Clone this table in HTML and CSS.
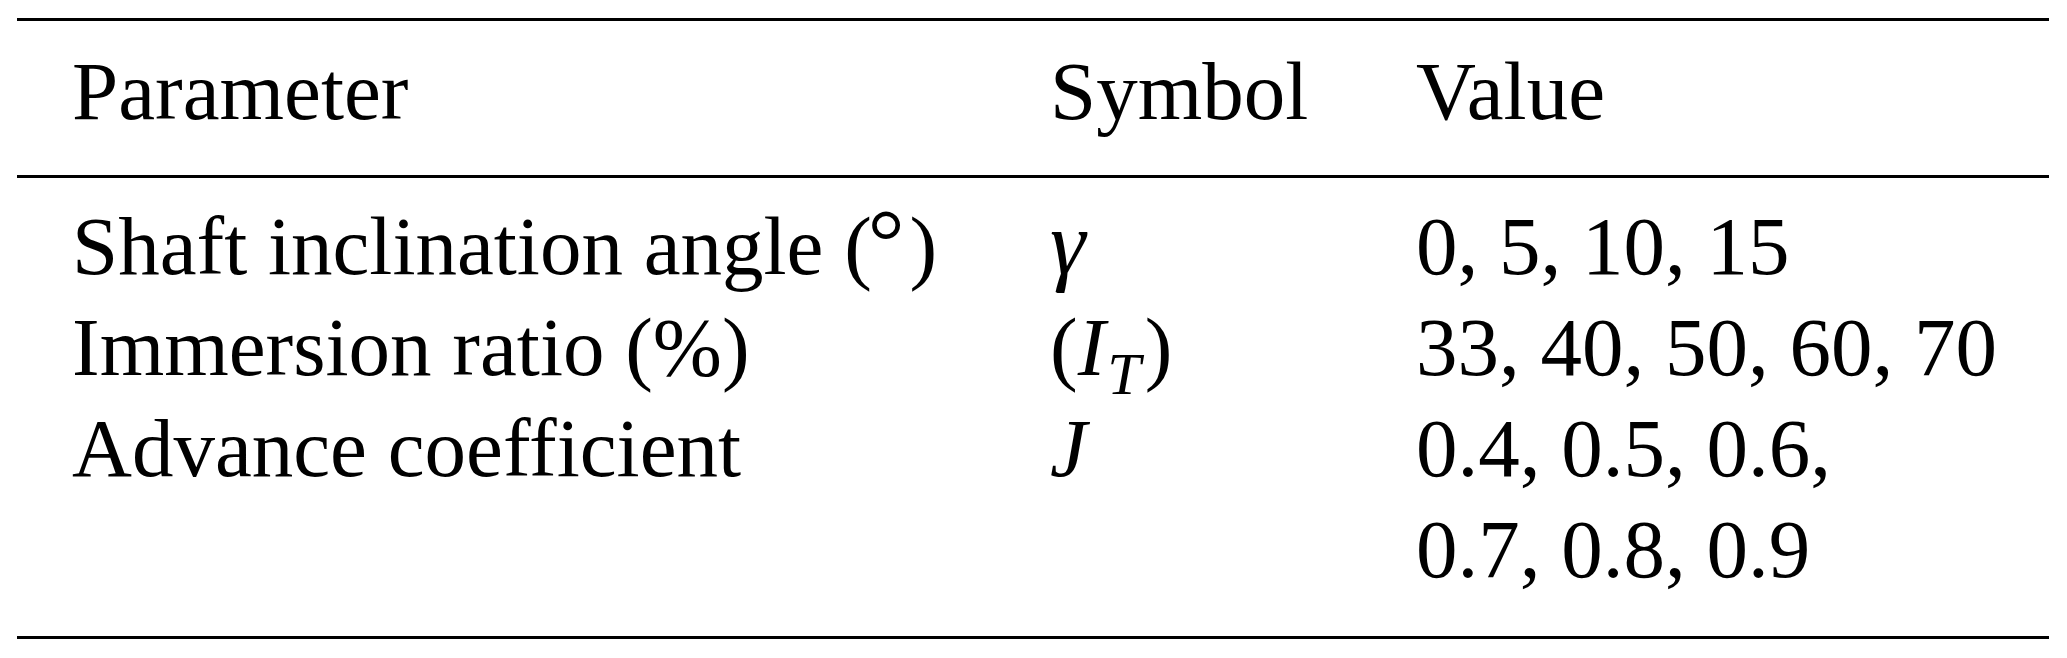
FILE: index.html
```html
<!DOCTYPE html>
<html lang="en">
<head>
<meta charset="utf-8">
<title>Parameters</title>
<link rel="stylesheet" href="styles.css">
</head>
<body>
<div class="sheet">
  <div class="row head">
    <div class="cell">Parameter</div>
    <div class="cell">Symbol</div>
    <div class="cell">Value</div>
  </div>
  <div class="row body">
    <div class="cell">Shaft inclination angle (<span class="deg">°</span>)</div>
    <div class="cell"><i class="math gamma">γ</i></div>
    <div class="cell">0, 5, 10, 15</div>

    <div class="cell">Immersion ratio (%)</div>
    <div class="cell">(<i class="math">I</i><sub class="sub"><i class="math">T</i></sub>)</div>
    <div class="cell">33, 40, 50, 60, 70</div>

    <div class="cell">Advance coefficient</div>
    <div class="cell"><i class="math">J</i></div>
    <div class="cell">0.4, 0.5, 0.6,<br>0.7, 0.8, 0.9</div>
  </div>
</div>
</body>
</html>
```

FILE: styles.css
```css
html, body {
  margin: 0;
  padding: 0;
  background: #ffffff;
}

body {
  font-family: "Liberation Serif", "Times New Roman", serif;
  font-size: 83px;
  line-height: 101px;
  color: #000000;
}

.sheet {
  width: 2032px;
  margin: 18px 0 0 17px;
  border-top: 3px solid #000000;
  border-bottom: 3px solid #000000;
}

.row {
  display: grid;
  grid-template-columns: 978px 366px 1fr;
  padding-left: 55px;
}

.head {
  padding-top: 20px;
  padding-bottom: 33px;
  border-bottom: 3px solid #000000;
}

.body {
  padding-top: 18px;
  padding-bottom: 36px;
}

.cell {
  white-space: nowrap;
}

.math {
  font-style: italic;
}

.gamma {
  display: inline-block;
  font-size: 90px;
  line-height: 0;
}

.deg {
  display: inline-block;
  font-size: 92px;
  line-height: 0;
  vertical-align: 2px;
  margin: 0 5px 0 -4px;
}

.sub {
  font-size: 60px;
  line-height: 0;
  vertical-align: -19px;
  margin-left: 2px;
  margin-right: 4px;
}
```
